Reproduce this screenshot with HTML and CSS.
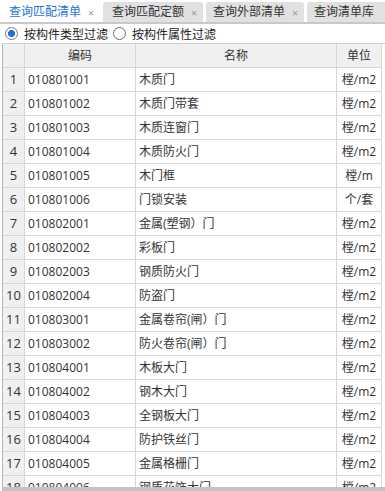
FILE: index.html
```html
<!DOCTYPE html>
<html lang="zh-CN">
<head>
  <meta charset="UTF-8">
  <title>查询匹配清单</title>
  <link rel="stylesheet" href="styles.css">
</head>
<body>

  <!-- 顶部页签 -->
  <div class="tabs">
    <div class="tab active"><span class="tab-text">查询匹配清单</span><span class="tab-close">×</span></div>
    <div class="tab"><span class="tab-text">查询匹配定额</span><span class="tab-close">×</span></div>
    <div class="tab"><span class="tab-text">查询外部清单</span><span class="tab-close">×</span></div>
    <div class="tab"><span class="tab-text">查询清单库</span><span class="tab-close">×</span></div>
  </div>

  <!-- 过滤方式 -->
  <div class="filter">
    <label class="radio checked"><span class="dot"></span>按构件类型过滤</label>
    <label class="radio"><span class="dot"></span>按构件属性过滤</label>
  </div>

  <!-- 清单表格 -->
  <div class="grid">
    <div class="row head">
      <div class="cell num"></div>
      <div class="cell center">编码</div>
      <div class="cell center">名称</div>
      <div class="cell center">单位</div>
    </div>
    <div class="row"><div class="cell num">1</div><div class="cell">010801001</div><div class="cell">木质门</div><div class="cell center">樘/m2</div></div>
    <div class="row"><div class="cell num">2</div><div class="cell">010801002</div><div class="cell">木质门带套</div><div class="cell center">樘/m2</div></div>
    <div class="row"><div class="cell num">3</div><div class="cell">010801003</div><div class="cell">木质连窗门</div><div class="cell center">樘/m2</div></div>
    <div class="row"><div class="cell num">4</div><div class="cell">010801004</div><div class="cell">木质防火门</div><div class="cell center">樘/m2</div></div>
    <div class="row"><div class="cell num">5</div><div class="cell">010801005</div><div class="cell">木门框</div><div class="cell center">樘/m</div></div>
    <div class="row"><div class="cell num">6</div><div class="cell">010801006</div><div class="cell">门锁安装</div><div class="cell center">个/套</div></div>
    <div class="row"><div class="cell num">7</div><div class="cell">010802001</div><div class="cell">金属(塑钢）门</div><div class="cell center">樘/m2</div></div>
    <div class="row"><div class="cell num">8</div><div class="cell">010802002</div><div class="cell">彩板门</div><div class="cell center">樘/m2</div></div>
    <div class="row"><div class="cell num">9</div><div class="cell">010802003</div><div class="cell">钢质防火门</div><div class="cell center">樘/m2</div></div>
    <div class="row"><div class="cell num">10</div><div class="cell">010802004</div><div class="cell">防盗门</div><div class="cell center">樘/m2</div></div>
    <div class="row"><div class="cell num">11</div><div class="cell">010803001</div><div class="cell">金属卷帘(闸）门</div><div class="cell center">樘/m2</div></div>
    <div class="row"><div class="cell num">12</div><div class="cell">010803002</div><div class="cell">防火卷帘(闸）门</div><div class="cell center">樘/m2</div></div>
    <div class="row"><div class="cell num">13</div><div class="cell">010804001</div><div class="cell">木板大门</div><div class="cell center">樘/m2</div></div>
    <div class="row"><div class="cell num">14</div><div class="cell">010804002</div><div class="cell">钢木大门</div><div class="cell center">樘/m2</div></div>
    <div class="row"><div class="cell num">15</div><div class="cell">010804003</div><div class="cell">全钢板大门</div><div class="cell center">樘/m2</div></div>
    <div class="row"><div class="cell num">16</div><div class="cell">010804004</div><div class="cell">防护铁丝门</div><div class="cell center">樘/m2</div></div>
    <div class="row"><div class="cell num">17</div><div class="cell">010804005</div><div class="cell">金属格栅门</div><div class="cell center">樘/m2</div></div>
    <div class="row"><div class="cell num">18</div><div class="cell">010804006</div><div class="cell">钢质花饰大门</div><div class="cell center">樘/m2</div></div>
  </div>

</body>
</html>
```

FILE: styles.css
```css
/* 页面基础 */
body {
  margin: 0;
  width: 385px;
  height: 491px;
  overflow: hidden;
  background: #fff;
  font-family: "Open Sans", "Noto Sans CJK SC", sans-serif;
  font-size: 12px;
  color: #333;
}

/* 页签 */
.tabs {
  display: flex;
  align-items: flex-end;
  gap: 3px;
  height: 22px;
  border-bottom: 2px solid #c9c9c9;
  overflow: hidden;
  white-space: nowrap;
}

.tab {
  flex: none;
  display: flex;
  align-items: center;
  box-sizing: border-box;
  width: 100px;
  height: 20px;
  padding: 0 0 0 9px;
  background: #e1e1e1;
  border-radius: 3px 3px 0 0;
  color: #333;
}

.tab:nth-child(3),
.tab:nth-child(4) {
  width: 98px;
  padding-left: 7px;
}

.tab.active {
  background: #fff;
  color: #1e74d6;
}

.tab-text {
  width: 72px;
  line-height: 20px;
}

.tab-close {
  margin-left: 7px;
  color: #9a9a9a;
  font-size: 11px;
}

/* 过滤方式 */
.filter {
  display: flex;
  align-items: center;
  height: 19px;
  padding-left: 5px;
}

.radio {
  display: flex;
  align-items: center;
  margin-right: 5px;
  color: #222;
}

.dot {
  box-sizing: border-box;
  width: 13px;
  height: 13px;
  margin-right: 6px;
  border: 1px solid #6a6a6a;
  border-radius: 50%;
  background: #fff;
}

.radio.checked .dot {
  border-color: #7a7a7a;
  background: radial-gradient(circle, #1a73d8 0 3.3px, #fff 3.8px);
}

/* 表格 */
.grid {
  box-sizing: border-box;
  height: 448px;
  margin-left: 2px;
  border-top: 1px solid #d0d0d0;
  border-left: 1px solid #b8b8b8;
  border-bottom: 4px solid #c4c4c4;
  overflow: hidden;
}

.row {
  display: grid;
  grid-template-columns: 22px 111px 201px 45px;
}

.cell {
  box-sizing: border-box;
  height: 24px;
  padding-left: 3px;
  border-right: 1px solid #d6d6d6;
  border-bottom: 1px solid #d6d6d6;
  line-height: 23px;
  white-space: nowrap;
  overflow: hidden;
}

.cell.center {
  padding-left: 0;
  text-align: center;
}

.cell.num {
  padding-left: 0;
  background: #f0f0f0;
  text-align: center;
  font-size: 13px;
}

.head .cell {
  background: #f0f0f0;
}
```
